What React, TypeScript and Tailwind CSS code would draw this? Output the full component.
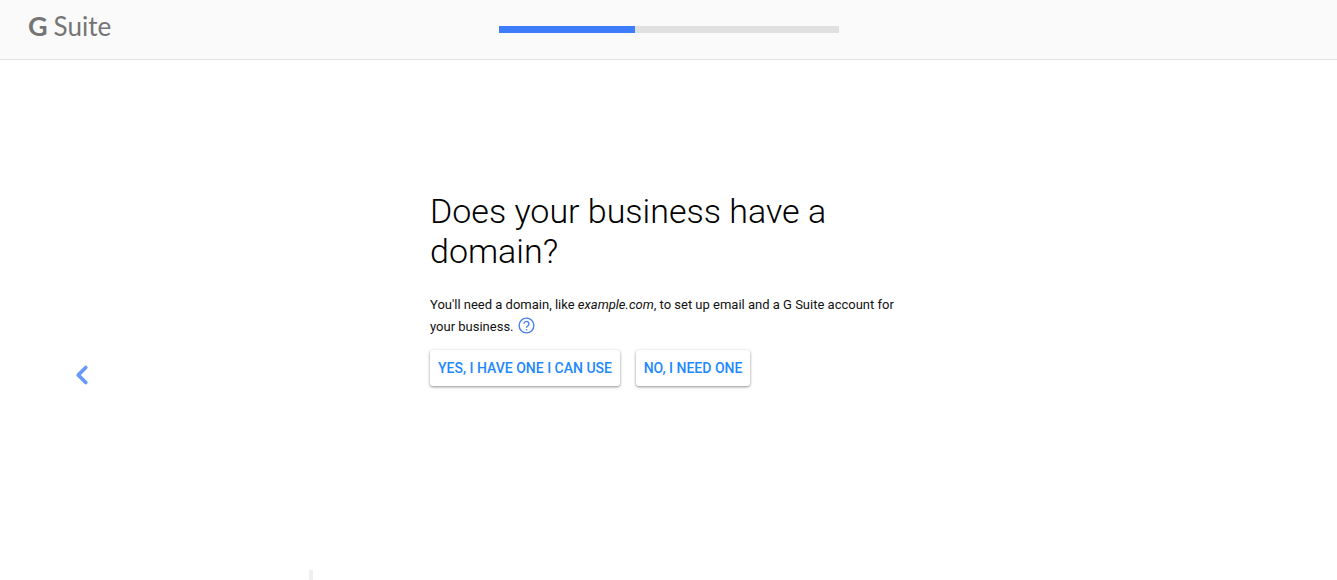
import { ChevronLeft } from 'lucide-react';

function Header() {
  return (
    <header className="flex h-[60px] items-center border-b border-[#e0e0e0] bg-[#fafafa]">
      <div className="flex w-[499px] items-center pb-[6px] pl-[28px] font-['Lato',sans-serif] text-[26px] text-[#757575]">
        <span className="text-[27px] font-bold">G</span>
        <span className="ml-[6px]">Suite</span>
      </div>
      <div className="h-[7px] w-[340px] bg-[#e0e0e0]">
        <div className="h-full w-[136px] bg-[#3d7cfb]" />
      </div>
    </header>
  );
}

function ChoiceButton({ label, width }: { label: string; width: string }) {
  return (
    <button className={`h-[36px] rounded-[3px] bg-white text-[14px] font-medium text-[#1e88ff] shadow-[0_1px_3px_rgba(0,0,0,0.45)] ${width}`}>
      {label}
    </button>
  );
}

export default function App() {
  return (
    <div className="flex h-[580px] flex-col overflow-hidden bg-white font-['Roboto',sans-serif]">
      <Header />
      <main className="flex flex-1 pt-[131px]">
        <div className="flex w-[430px] pl-[67px] pt-[169px]">
          <ChevronLeft className="h-[30px] w-[30px] text-[#6699f8]" strokeWidth={3} />
        </div>
        <div className="w-[480px]">
          <h1 className="w-[420px] text-[34px] font-light leading-[40px] text-black">
            Does your business have a domain?
          </h1>
          <p className="mt-[23px] text-[13px] leading-[22px] text-[#111]">
            You'll need a domain, like <em>example.com</em>, to set up email and a G Suite account for your business.
            <svg viewBox="0 0 24 24" className="ml-[4px] inline-block h-[17px] w-[17px] -translate-y-[2px] align-middle" fill="none" stroke="#4a80f0" strokeWidth="2">
              <circle cx="12" cy="12" r="10.4" />
              <path d="M8.6 9.6a3.4 3.4 0 1 1 5.5 2.7c-1.2.9-2.1 1.5-2.1 3" />
              <path d="M12 17v1.8" />
            </svg>
          </p>
          <div className="mt-[12px] flex gap-[16px]">
            <ChoiceButton label="YES, I HAVE ONE I CAN USE" width="w-[190px]" />
            <ChoiceButton label="NO, I NEED ONE" width="w-[114px]" />
          </div>
        </div>
      </main>
      <div className="h-[10px] pl-[309px]">
        <div className="h-full w-[4px] bg-[#f0f0f0]" />
      </div>
    </div>
  );
}
